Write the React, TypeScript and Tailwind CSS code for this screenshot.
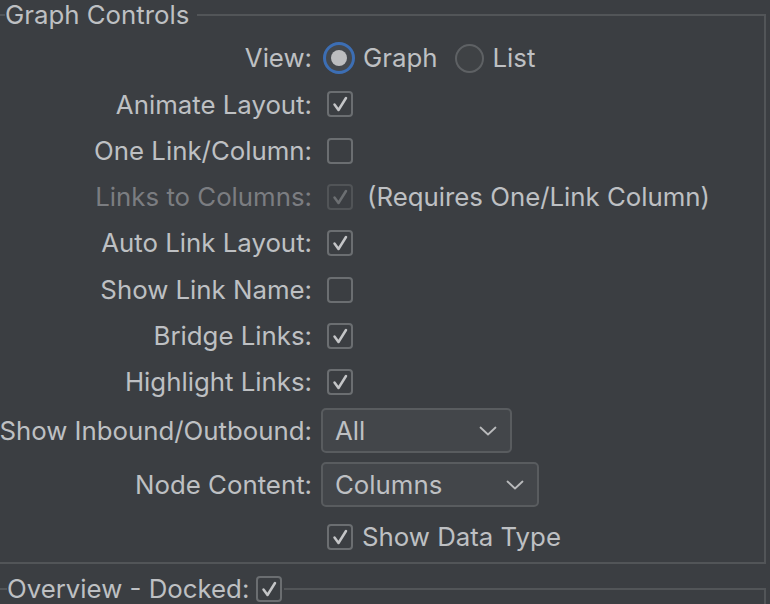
import type { ReactNode } from 'react'

const font = { fontFamily: 'Inter, "Noto Sans", sans-serif' }

function CheckBox({ checked, disabled = false }: { checked: boolean; disabled?: boolean }) {
  return (
    <span
      className={
        'flex h-[26px] w-[26px] shrink-0 items-center justify-center rounded-[4px] border-2 ' +
        (disabled ? 'border-[#515457]' : 'border-[#6b6e71]')
      }
    >
      {checked && (
        <svg width="22" height="22" viewBox="0 0 22 22" fill="none">
          <path
            d="M5.5 11.5 L9.5 17 L17 5"
            stroke={disabled ? '#6c6f72' : '#c4c5c7'}
            strokeWidth="2.5"
            strokeLinecap="round"
            strokeLinejoin="round"
          />
        </svg>
      )}
    </span>
  )
}

function Chevron() {
  return (
    <svg width="18" height="10" viewBox="0 0 18 10" fill="none">
      <path d="M1.5 1.5 L9 8.5 L16.5 1.5" stroke="#b9babc" strokeWidth="1.8" strokeLinecap="round" strokeLinejoin="round" />
    </svg>
  )
}

function Label({ text, disabled = false }: { text: string; disabled?: boolean }) {
  return (
    <div className="flex w-[312px] shrink-0 justify-end">
      <span className={'whitespace-nowrap ' + (disabled ? 'text-[#7b7d81]' : 'text-[#bec0c3]')}>{text}</span>
    </div>
  )
}

function Row({ label, disabled = false, children }: { label: string; disabled?: boolean; children: ReactNode }) {
  return (
    <div className="flex h-[46.3px] items-center">
      <Label text={label} disabled={disabled} />
      <div className="flex items-center pl-[15px]">{children}</div>
    </div>
  )
}

function Select({ value, width }: { value: string; width: string }) {
  return (
    <div
      className={
        'flex h-[45px] items-center justify-between rounded-[5px] border-2 border-[#595c5f] bg-[#43464a] pl-[12px] pr-[13px] ' +
        width
      }
    >
      <span>{value}</span>
      <Chevron />
    </div>
  )
}

export default function App() {
  return (
    <div className="h-[604px] w-[770px] overflow-hidden bg-[#3b3e42] text-[25.8px] leading-none text-[#bec0c3]" style={font}>
      <div className="w-[766px]">
        {/* Graph Controls group */}
        <div className="flex h-[30px] items-center">
          <div className="h-[2px] w-[5px] bg-[#525558]" />
          <span>Graph Controls</span>
          <div className="ml-[8px] h-[16px] flex-1 self-end border-r-2 border-t-2 border-[#525558]" />
        </div>
        <div className="border-b-2 border-r-2 border-[#525558] pt-[5px]">
          <div className="flex h-[46.3px] items-center">
            <Label text="View:" />
            <div className="flex items-center pl-[11px]">
              <span className="flex h-[32px] w-[32px] items-center justify-center rounded-full border-[3px] border-[#3c6eb4] bg-[#44484d]">
                <span className="h-[16px] w-[16px] rounded-full bg-[#bcbdbf]" />
              </span>
              <span className="ml-[8px]">Graph</span>
              <span className="ml-[17px] h-[29px] w-[29px] rounded-full border-2 border-[#5e6164] bg-[#3f4245]" />
              <span className="ml-[9px]">List</span>
            </div>
          </div>
          <Row label="Animate Layout:">
            <CheckBox checked />
          </Row>
          <Row label="One Link/Column:">
            <CheckBox checked={false} />
          </Row>
          <Row label="Links to Columns:" disabled>
            <CheckBox checked disabled />
            <span className="ml-[14px] whitespace-nowrap">(Requires One/Link Column)</span>
          </Row>
          <Row label="Auto Link Layout:">
            <CheckBox checked />
          </Row>
          <Row label="Show Link Name:">
            <CheckBox checked={false} />
          </Row>
          <Row label="Bridge Links:">
            <CheckBox checked />
          </Row>
          <Row label="Highlight Links:">
            <CheckBox checked />
          </Row>

          <div className="mt-[3px] flex h-[45px] items-center">
            <Label text="Show Inbound/Outbound:" />
            <div className="pl-[9px]">
              <Select value="All" width="w-[191px]" />
            </div>
          </div>
          <div className="mt-[9px] flex h-[45px] items-center">
            <Label text="Node Content:" />
            <div className="pl-[9px]">
              <Select value="Columns" width="w-[218px]" />
            </div>
          </div>
          <div className="flex h-[55px] items-center pl-[327px] pt-[5px]">
            <CheckBox checked />
            <span className="ml-[9px]">Show Data Type</span>
          </div>
        </div>

        {/* Overview group */}
        <div className="mt-[10px] flex h-[30px] items-center">
          <div className="h-[2px] w-[7px] bg-[#525558]" />
          <span>Overview - Docked:</span>
          <span className="ml-[7px]">
            <CheckBox checked />
          </span>
          <div className="ml-[2px] h-[16px] flex-1 self-end border-r-2 border-t-2 border-[#525558]" />
        </div>
      </div>
    </div>
  )
}
